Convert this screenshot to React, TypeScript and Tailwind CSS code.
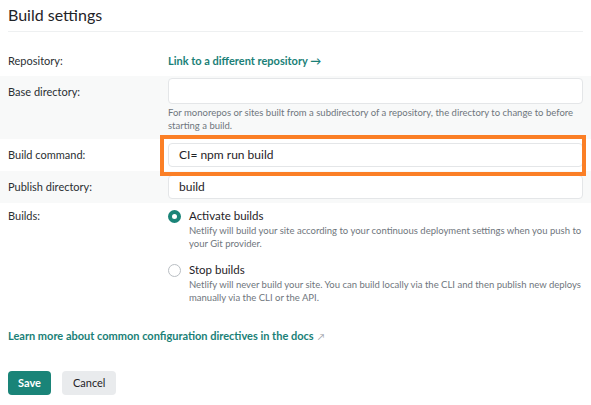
import type { ReactNode } from "react";

const font = { fontFamily: "Lato, 'Open Sans', sans-serif" };

function Row({
  label,
  children,
  shaded = false,
  className = "",
  labelClass = "leading-[24px]",
}: {
  label: string;
  children: ReactNode;
  shaded?: boolean;
  className?: string;
  labelClass?: string;
}) {
  return (
    <div
      className={`grid grid-cols-[160px_1fr] px-2 ${shaded ? "bg-[#f8f9f9]" : "bg-white"} ${className}`}
    >
      <div className={`text-[11px] text-[#2b2f33] ${labelClass}`}>{label}</div>
      <div className="min-w-0">{children}</div>
    </div>
  );
}

function TextInput({ value = "" }: { value?: string }) {
  return (
    <div className="flex h-[24px] items-center rounded-[4px] border border-[#e4e6e8] bg-white px-[10px] text-[12px] text-[#1f2328]">
      {value}
    </div>
  );
}

function Radio({ checked }: { checked: boolean }) {
  return checked ? (
    <span className="mt-[1.5px] block h-[13px] w-[13px] shrink-0 rounded-full border-[4px] border-[#1a8478] bg-white" />
  ) : (
    <span className="mt-[1.5px] block h-[13px] w-[13px] shrink-0 rounded-full border border-[#b9bec3] bg-white" />
  );
}

function BuildOption({
  checked,
  title,
  desc,
}: {
  checked: boolean;
  title: string;
  desc: string;
}) {
  return (
    <div className="flex gap-[8px]">
      <Radio checked={checked} />
      <div>
        <div className="text-[11.5px] leading-[16px] text-[#1f2328]">{title}</div>
        <p className="text-[9.5px] leading-[13px] text-[#6f767d]">{desc}</p>
      </div>
    </div>
  );
}

export default function App() {
  return (
    <div className="min-h-screen bg-white" style={font}>
      <div className="px-2">
        <h2 className="border-b border-[#eef0f1] pb-[6px] pt-[4px] text-[16px] leading-[21px] text-[#1f2328]">
          Build settings
        </h2>
      </div>

      <Row label="Repository:" className="mt-[14px] py-[3px]">
        <a href="#" className="block text-[11px] font-bold leading-[24px] text-[#1a7f77]">
          Link to a different repository →
        </a>
      </Row>

      <Row label="Base directory:" shaded className="pb-[7px] pt-[2px]" labelClass="leading-[28px]">
        <div className="flex h-[26px] rounded-[4px] border border-[#e4e6e8] bg-white" />
        <p className="mt-[2px] text-[9.5px] leading-[13px] text-[#6f767d]">
          For monorepos or sites built from a subdirectory of a repository, the directory to change to before
          starting a build.
        </p>
      </Row>

      <Row label="Build command:" className="py-[4px]">
        <div className="relative">
          <TextInput value="CI= npm run build" />
          <div className="pointer-events-none absolute -bottom-[9px] -left-2 -right-[3px] -top-2 border-4 border-[#fb7f26]" />
        </div>
      </Row>

      <Row label="Publish directory:" shaded className="py-[4px]">
        <TextInput value="build" />
      </Row>

      <Row label="Builds:" className="pt-[5px]" labelClass="leading-[16px]">
        <div className="flex flex-col gap-[12px]">
          <BuildOption
            checked
            title="Activate builds"
            desc="Netlify will build your site according to your continuous deployment settings when you push to your Git provider."
          />
          <BuildOption
            checked={false}
            title="Stop builds"
            desc="Netlify will never build your site. You can build locally via the CLI and then publish new deploys manually via the CLI or the API."
          />
        </div>
      </Row>

      <div className="mt-[18px] px-2">
        <a href="#" className="inline-flex items-center gap-[4px] text-[11px] font-bold text-[#1a7f77]">
          Learn more about common configuration directives in the docs
          <span className="text-[9px] font-normal text-[#9aa0a6]">↗</span>
        </a>
      </div>

      <div className="mt-[25px] flex gap-[11px] px-2">
        <button className="h-[24px] rounded-[4px] bg-[#1a8478] px-[10px] text-[11px] font-bold text-white">
          Save
        </button>
        <button className="h-[24px] rounded-[4px] bg-[#e9ebed] px-[11px] text-[11px] text-[#1f2328]">
          Cancel
        </button>
      </div>
    </div>
  );
}
